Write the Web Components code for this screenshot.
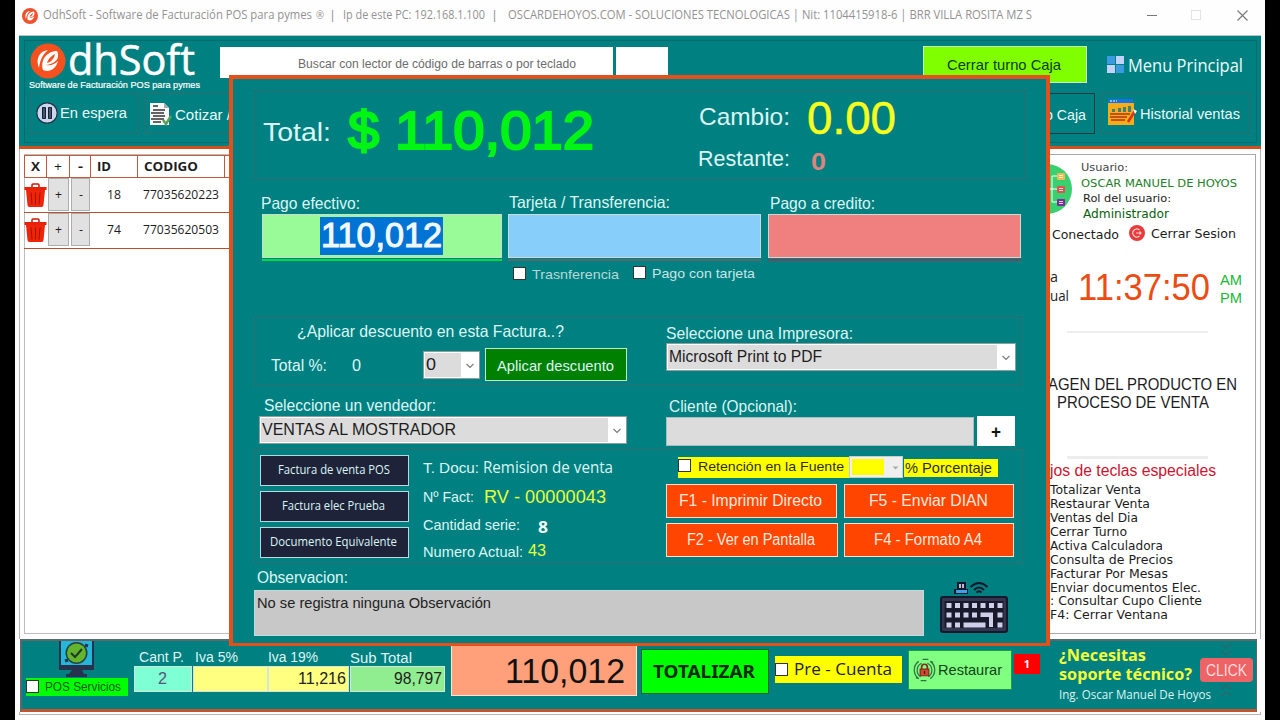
<!DOCTYPE html>
<html lang="es">
<head>
<meta charset="utf-8">
<title>OdhSoft</title>
<style>
  html, body { margin: 0; height: 100%; }
  body {
    background: #000;
    width: 1280px;
    height: 720px;
    overflow: hidden;
    font-family: "Liberation Sans", Arial, sans-serif;
  }
</style>
</head>
<body>
<pos-window></pos-window>

<script>
// Shared by every element: fills an open shadow root with styles and markup
class BaseElement extends HTMLElement {
  constructor() {
    super();
    this.attachShadow({ mode: 'open' });
  }

  connectedCallback() {
    this.shadowRoot.innerHTML = `
      <style>
        :host { display: block; box-sizing: border-box; }
        * { box-sizing: border-box; }
        .row { display: flex; align-items: flex-start; }
        .col { display: flex; flex-direction: column; }
        svg { display: block; flex: none; }
        ${this.styles()}
      </style>
      ${this.markup()}`;
    this.ready();
  }

  styles() { return ''; }
  markup() { return '<slot></slot>'; }
  ready() {}
}

const FONTS = {
  sans: { family: '"Liberation Sans", Arial, sans-serif', rise: 0.8465 },
  segoe: { family: '"Open Sans", "Noto Sans", sans-serif', rise: 0.888 },
  noto: { family: '"Noto Sans", sans-serif', rise: 0.888 },
  verdana: { family: '"DejaVu Sans", sans-serif', rise: 0.846 }
};

// <ui-text size w drop gap font weight thick color>
// w: width of the line, drop: baseline below the row's top, gap: space at the left
class UiText extends BaseElement {
  styles() {
    const size = Number(this.getAttribute('size') || 16);
    const font = FONTS[this.getAttribute('font') || 'sans'];
    const drop = this.getAttribute('drop');
    const top = drop === null ? 0 : Number(drop) - size * font.rise;
    return `
      :host {
        display: flex;
        flex: none;
        height: ${size}px;
        font: ${this.getAttribute('weight') || 400} ${size}px/${size}px ${font.family};
        margin-left: ${this.getAttribute('gap') || 0}px;
        padding-top: ${Math.max(top, 0)}px;
        margin-top: ${Math.min(top, 0)}px;
        box-sizing: content-box;
        color: ${this.getAttribute('color') || 'inherit'};
        -webkit-text-stroke: ${this.getAttribute('thick') || 0}px currentColor;
      }
      span { flex: none; white-space: pre; transform-origin: 0 50%; }`;
  }
  markup() { return '<span><slot></slot></span>'; }
  ready() {
    const w = Number(this.getAttribute('w'));
    if (!w) return;
    const span = this.shadowRoot.querySelector('span');
    const natural = span.getBoundingClientRect().width;
    this.style.width = w + 'px';
    if (natural) span.style.transform = `scaleX(${w / natural})`;
  }
}

// Box with a fixed size: <ui-box w h gap drop bg line>
class UiBox extends BaseElement {
  styles() {
    const a = (name, other) => this.getAttribute(name) || other;
    return `
      :host {
        display: flex;
        align-items: flex-start;
        flex: none;
        width: ${a('w', 10)}px;
        height: ${a('h', 10)}px;
        margin-left: ${a('gap', 0)}px;
        margin-top: ${a('drop', 0)}px;
        background: ${a('bg', 'transparent')};
        border: ${a('line', '0')};
      }
      :host([center]) { justify-content: center; }`;
  }
}

class UiCheck extends BaseElement {
  styles() {
    return `
      :host {
        flex: none;
        width: 13px;
        height: 13px;
        background: #fff;
        border: 1px solid #333;
        margin-left: ${this.getAttribute('gap') || 0}px;
        margin-top: ${this.getAttribute('drop') || 0}px;
      }`;
  }
  markup() { return ''; }
}

// Flat drop-down list
class UiCombo extends BaseElement {
  styles() {
    return `
      :host {
        flex: none;
        display: flex;
        align-items: stretch;
        width: ${this.getAttribute('w')}px;
        height: ${this.getAttribute('h')}px;
        margin-left: ${this.getAttribute('gap') || 0}px;
        margin-top: ${this.getAttribute('drop') || 0}px;
        background: #fff;
        border: 1px solid #8d9c9c;
      }
      .value { flex: 1; background: #dcdcdc; margin: 1px 0 1px 1px; color: #1c1c1c; }
      .arrow { width: 18px; display: flex; align-items: center; justify-content: center; }`;
  }
  markup() {
    return `
      <div class="value"><slot></slot></div>
      <div class="arrow">
        <svg width="10" height="7" viewBox="0 0 10 7"><path d="M1.5 2 5 5.5 8.5 2" fill="none" stroke="#777" stroke-width="1.1"/></svg>
      </div>`;
  }
}

class PosTitlebar extends BaseElement {
  styles() {
    return `
      :host { height: 35px; background: #fffefe; color: #929292; }
      .row { height: 35px; }
      .logo { margin: 8px 0 0 7px; }
      .ctl { margin-top: 8px; }`;
  }
  markup() {
    return `
      <div class="row">
        <svg class="logo" width="16" height="16" viewBox="0 0 36 36">
          <circle cx="18" cy="18" r="18" fill="#f0512d"/>
          <path d="M9 25C5 15 10 8 18 7c-6 5-8 11-9 18z" fill="#fff"/>
          <path d="M13 27C10 17 17 8 27 8c4 8-3 13-11 14 5 1 9-1 12-4-2 8-9 12-15 9z" fill="#fff"/>
          <path d="M17 20c1-4 4-7 8-9-1 5-4 8-8 9z" fill="#f0512d"/>
        </svg>
        <ui-text font="segoe" size="12" w="269" drop="20" gap="5">OdhSoft - Software de Facturación POS para pymes</ui-text>
        <ui-text font="segoe" size="10" w="8" drop="19" gap="4">®</ui-text>
        <ui-text size="12" w="3" drop="19" gap="7">|</ui-text>
        <ui-text font="segoe" size="12" w="142" drop="20" gap="9">Ip de este PC: 192.168.1.100</ui-text>
        <ui-text size="12" w="3" drop="19" gap="8">|</ui-text>
        <ui-text font="segoe" size="12" w="524" drop="20" gap="12">OSCARDEHOYOS.COM - SOLUCIONES TECNOLOGICAS | Nit: 1104415918-6 | BRR VILLA ROSITA MZ S</ui-text>
        <svg class="ctl" style="margin-left:115px" width="104" height="14" viewBox="0 0 104 14" fill="none">
          <path d="M0 7.500h10" stroke="#777"/>
          <rect x="44.500" y="2.500" width="9" height="9" stroke="#e6e2e2"/>
          <path d="M90.500 2.500l10 10M100.500 2.500l-10 10" stroke="#777" stroke-width="1.100"/>
        </svg>
      </div>`;
  }
}

class PosHeader extends BaseElement {
  styles() {
    return `
      :host {
        height: 114px;
        margin: 0 4px;
        background: #008080;
        border-top: 1px solid #b9c4c4;
        border-bottom: 3px solid #d0501f;
        padding: 4px 4px 3px 5px;
        color: #e9fbfb;
      }
      .inner { border: 1px solid #086a6d; height: 103px; }
      .brand { width: 195px; }
      .brand svg { margin: 2px 0 0 5px; }
      .slot-box { border: 1px solid #2d6e6e; height: 41px; display: flex; }
      .tools { height: 41px; }`;
  }
  markup() {
    return `
      <div class="inner">
        <div class="row" style="height:52px">
          <div class="brand">
            <div class="row" style="height:37px">
              <svg width="36" height="36" viewBox="0 0 36 36">
                <circle cx="18" cy="18" r="17.500" fill="#f4511e"/>
                <path d="M9 25C5 15 10 8 18 7c-6 5-8 11-9 18z" fill="#fff"/>
                <path d="M13 27C10 17 17 8 27 8c4 8-3 13-11 14 5 1 9-1 12-4-2 8-9 12-15 9z" fill="#fff"/>
                <path d="M17 20c1-4 4-7 8-9-1 5-4 8-8 9z" fill="#f4511e"/>
              </svg>
              <ui-text font="segoe" size="42.500" w="127" drop="35" gap="2" thick="0.6" color="#fff">dhSoft</ui-text>
            </div>
            <ui-text size="9.500" w="171" drop="10" gap="4" thick="0.2" color="#fff">Software de Facturación POS para pymes</ui-text>
          </div>
          <ui-box w="393" h="31" drop="6" bg="#fff"><ui-text size="12" w="278" drop="21" gap="78" color="#6c6c6c">Buscar con lector de código de barras o por teclado</ui-text></ui-box>
          <ui-box w="52" h="31" drop="6" gap="3" bg="#fff"></ui-box>
          <ui-box w="164" h="37" drop="5" gap="255" bg="#7fff00" line="1px solid #c9f7c0" center><ui-text size="15" w="114" drop="23" gap="-2" color="#123a12">Cerrar turno Caja</ui-text></ui-box>
          <svg style="margin:15px 0 0 20px" width="17" height="17" viewBox="0 0 17 17">
            <path fill="#3b9be0" d="M0 0h8v8H0zM9 9h8v8H9z"/><path fill="#c3d3f7" d="M9 0h8v8H9zM0 9h8v8H0z"/>
          </svg>
          <ui-text font="segoe" size="18" w="115" drop="31" gap="4">Menu Principal</ui-text>
        </div>
        <div class="row tools">
          <div class="slot-box" style="width:109px;margin-left:5px">
            <svg style="margin:8px 0 0 5px" width="22" height="22" viewBox="0 0 22 22">
              <circle cx="11" cy="11" r="10.200" fill="#c9d6ee" stroke="#26344a" stroke-width="1.200"/>
              <path fill="#44546f" stroke="#17202e" d="M6.500 5.500h3v11h-3zM12.500 5.500h3v11h-3z"/>
            </svg>
            <ui-text size="15.500" w="67" drop="24" gap="2">En espera</ui-text>
          </div>
          <div class="slot-box" style="width:110px;margin-left:6px">
            <svg style="margin:8px 0 0 3px" width="23" height="24" viewBox="0 0 23 24">
              <path d="M1 1h14l5 5v17H1z" fill="#f8f8f8"/><path d="M15 1v5h5z" fill="#aaa"/>
              <path d="M4 4h5M4 8h12M2 11h13M4 14h12M2 17h13M4 20h8" stroke="#333" stroke-width="1.300"/>
              <path d="M14 18l3 4 5-8" fill="none" stroke="#5b9d59" stroke-width="2.500"/>
            </svg>
            <ui-text size="15" w="56" drop="26" gap="3">Cotizar /</ui-text>
          </div>
          <div class="slot-box" style="width:48px;margin-left:792px;border-color:#123c3f">
            <ui-text size="15" w="41" drop="26" gap="-3">o Caja</ui-text>
          </div>
          <div class="slot-box" style="width:149px;margin-left:6px">
            <svg style="margin:4px 0 0 5px" width="30" height="28" viewBox="0 0 30 28">
              <path d="M1 1h25v4H1z" fill="#1473e6"/><path d="M3 3h7" stroke="#fff" stroke-dasharray="2 1"/>
              <path d="M1 5h26v22H1z" fill="#f9ac15"/>
              <path d="M5 14v-3h3v3zM11 14v-4h3v4zM16 14V9h3v5zM21 14V8h3v6z" fill="#3f8174"/>
              <path d="M3 16h20M3 19h17M4 22h14" stroke="#b5331a" stroke-width="1.500"/>
              <path d="M28 13l-7 11" stroke="#d33523" stroke-width="2.600"/><path d="M26 11l4 2-2 3" fill="#fff"/>
            </svg>
            <ui-text size="15" w="100" drop="25" gap="3">Historial ventas</ui-text>
          </div>
        </div>
      </div>`;
  }
}

class PosItems extends BaseElement {
  styles() {
    return `
      :host { width: 210px; height: 480px; border: 1px solid #bdbdbd; border-right: 0; background: #fff; color: #1d1d1d; }
      .head, .item { display: flex; }
      .head { height: 23px; border: 1px solid #c05a3a; border-right: 0; margin-left: -1px; }
      .head > div { display: flex; justify-content: center; border-right: 1px solid #c05a3a; }
      .item { height: 36px; border-bottom: 1px solid #b8502e; margin-left: -1px; }
      .item:nth-of-type(2) { height: 35px; }
      .item svg { margin-top: 5px; }
      .btn { width: 21px; height: 33px; margin-left: 2px; background: #e1e1e1; border: 1px solid #adadad; display: flex; justify-content: center; }`;
  }
  item(id, code) {
    return `
      <div class="item">
        <svg width="23" height="25" viewBox="0 0 23 25">
          <path d="M8 4V2q0-1 1-1h5q1 0 1 1v2" fill="none" stroke="#c71a06" stroke-width="1.500"/>
          <path d="M0.500 4h22v3h-22z" fill="#e8220a"/><path d="M2 7h19l-1.500 15q0 2-2 2h-12q-2 0-2-2z" fill="#f02408"/>
          <path d="M7 9.500l1 12M11.500 9.500v12M16 9.500l-1 12" stroke="#a31404"/>
        </svg>
        <div class="btn" style="margin-left:1px"><ui-text font="segoe" size="12" w="7" drop="21">+</ui-text></div>
        <div class="btn" style="width:19px"><ui-text font="segoe" size="12" w="4" drop="21">-</ui-text></div>
        <ui-text font="segoe" size="12.500" w="14" drop="22" gap="17">${id}</ui-text>
        <ui-text font="segoe" size="12.500" w="76" drop="22" gap="22">${code}</ui-text>
      </div>`;
  }
  markup() {
    return `
      <div class="head">
        <div style="width:22px"><ui-text font="segoe" weight="700" size="13" w="9" drop="16">X</ui-text></div>
        <div style="width:23px"><ui-text font="segoe" size="13" w="8" drop="16">+</ui-text></div>
        <div style="width:21px"><ui-text font="segoe" weight="700" size="13" w="5" drop="16">-</ui-text></div>
        <div style="width:47px;justify-content:flex-start"><ui-text font="segoe" weight="700" size="13" w="14" drop="16" gap="6">ID</ui-text></div>
        <div style="width:87px;justify-content:flex-start"><ui-text font="segoe" weight="700" size="13" w="54" drop="16" gap="6">CODIGO</ui-text></div>
      </div>
      ${this.item('18', '77035620223')}
      ${this.item('74', '77035620503')}`;
  }
}

class PosSide extends BaseElement {
  styles() {
    return `
      :host { width: 210px; height: 480px; border: 1px solid #a9a9a9; border-left: 0; background: #fff; overflow: hidden; color: #1c1c1c; padding-left: 4px; }
      .sep { height: 2px; width: 141px; background: #ededed; margin-left: 17px; }
      .keys { height: 13.9px; }`;
  }
  markup() {
    const keys = [
      ['Totalizar Venta', 91], ['Restaurar Venta', 100], ['Ventas del Dia', 88], ['Cerrar Turno', 77],
      ['Activa Calculadora', 113], ['Consulta de Precios', 123], ['Facturar Por Mesas', 118],
      ['Enviar documentos Elec.', 151], [': Consultar Cupo Cliente', 152], ['F4: Cerrar Ventana', 118]
    ];
    return `
      <div class="row" style="height:67px">
        <svg width="23" height="62" viewBox="0 0 23 62" style="margin-left:0">
          <circle cx="-3" cy="34" r="25" fill="#39d06f"/>
          <path d="M2 21h6M-4 34H10M2 21v26h8" stroke="#fff" fill="none"/>
          <rect x="7" y="18" width="8" height="7" rx="1" fill="#f5b955"/><rect x="7" y="31" width="8" height="7" rx="1" fill="#e3524f"/><rect x="7" y="44" width="8" height="7" rx="1" fill="#7c2c9b"/>
          <path d="M9 20.500h4M9 22.500h4M9 33.500h4M9 35.500h4M9 46.500h4M9 48.500h4" stroke="#fff" stroke-width=".8"/>
        </svg>
        <div class="col" style="margin-left:8px">
          <div style="height:16px"><ui-text font="verdana" size="11" w="47" drop="16" color="#444">Usuario:</ui-text></div>
          <div style="height:16px"><ui-text font="verdana" size="11" w="156" drop="16" color="#26802a">OSCAR MANUEL DE HOYOS</ui-text></div>
          <div style="height:16px"><ui-text font="verdana" size="11" w="88" drop="15" gap="2">Rol del usuario:</ui-text></div>
          <div style="height:16px"><ui-text font="verdana" size="11.500" w="86" drop="16" gap="2" color="#08600c">Administrador</ui-text></div>
        </div>
      </div>
      <div class="row" style="height:40px">
        <ui-text font="verdana" size="12" w="67" drop="17" gap="2">Conectado</ui-text>
        <svg style="margin:3px 0 0 10px" width="16" height="16" viewBox="0 0 16 16">
          <circle cx="8" cy="8" r="8" fill="#e53b3b"/>
          <path d="M10.500 5A4 4 0 1 0 10.500 11M7 8h5M10.500 6.500 12 8l-1.500 1.500" fill="none" stroke="#ffc7c7" stroke-width="1.200"/>
        </svg>
        <ui-text font="verdana" size="12" w="85" drop="16" gap="6">Cerrar Sesion</ui-text>
      </div>
      <div class="row" style="height:69px">
        <div class="col" style="width:27px">
          <div style="height:20px"><ui-text font="segoe" size="15" w="8" drop="20">a</ui-text></div>
          <div style="height:20px"><ui-text font="segoe" size="15" w="19" drop="19.500">ual</ui-text></div>
        </div>
        <ui-text size="36" w="132" drop="38" gap="1" color="#ec4c12">11:37:50</ui-text>
        <div class="col" style="margin-left:10px;color:#20b836">
          <div style="height:18px"><ui-text size="15.500" w="22" drop="23.500">AM</ui-text></div>
          <div style="height:18px"><ui-text size="15.500" w="22" drop="23.500">PM</ui-text></div>
        </div>
      </div>
      <div class="sep"></div>
      <div style="height:42px"></div>
      <div style="height:18px"><ui-text size="16" w="189" drop="16" gap="-2">AGEN DEL PRODUCTO EN</ui-text></div>
      <div style="height:63px"><ui-text size="16" w="152" drop="16" gap="7">PROCESO DE VENTA</ui-text></div>
      <div class="sep" style="height:3px"></div>
      <div style="height:20px"><ui-text size="16" w="166" drop="18" gap="0" color="#cc1430">jos de teclas especiales</ui-text></div>
      <div style="height:3px"></div>
      ${keys.map(([t, w]) => `<div class="keys"><ui-text font="verdana" size="11.500" w="${w}" drop="13">${t}</ui-text></div>`).join('')}`;
  }
}

class PosFooter extends BaseElement {
  styles() {
    return `
      :host {
        height: 73px;
        margin: 0 8px 0 5px;
        background: #008080;
        border: 2px solid #5a6a6c;
        border-width: 2px 1px 0 2px;
        border-bottom: 3px solid #c2552f;
        color: #dff5f5;
      }
      .service { width: 106px; height: 68px; padding-left: 4px; }
      .service svg { margin: 0 0 0 32px; }
      .amount { display: flex; flex-direction: column; }
      .amount > div { height: 25px; }`;
  }
  amount(label, lw, lgap, ldrop, gap, box) {
    return `<div class="amount" style="margin-left:${gap}px"><div><ui-text size="14" w="${lw}" drop="${ldrop}" gap="${lgap}">${label}</ui-text></div>${box}</div>`;
  }
  markup() {
    const line = '1px solid #d4e6dc';
    return `
      <div class="row">
        <div class="service">
          <svg width="37" height="37" viewBox="0 0 37 37">
            <path d="M1 0h35v29H1z" fill="#26324e"/><path d="M3 0h31v24H3z" fill="#25b7d9"/>
            <path d="M14 29h10l2 4H11z" fill="#26324e"/><path d="M8 33h21v3H8z" fill="#26324e"/>
            <circle cx="18.500" cy="12" r="11" fill="#263f44"/><circle cx="18.500" cy="12" r="9.500" fill="#62b52c"/>
            <path d="M13 12l4 4 7-8" fill="none" stroke="#203a26" stroke-width="2"/>
            <path d="M10 19l-3 1M27 4l3 1" stroke="#26324e" stroke-width="3"/>
          </svg>
          <ui-box w="102" h="18" bg="#00ff00"><ui-check drop="2"></ui-check><ui-text size="12" w="76" drop="13" gap="6" color="#0b5a14">POS Servicios</ui-text></ui-box>
        </div>
        ${this.amount('Cant P.', 45, 5, 21, 6, `<ui-box w="58" h="26" bg="#7fffd4" line="${line}"><ui-text size="17" w="9" drop="17.500" gap="23" color="#557">2</ui-text></ui-box>`)}
        ${this.amount('Iva 5%', 43, 2, 20.5, 1, `<ui-box w="75" h="26" bg="#ffff80" line="${line}"></ui-box>`)}
        ${this.amount('Iva 19%', 50, 0, 20.5, 0, `<ui-box w="81" h="26" bg="#ffff80" line="${line}"><ui-text size="17" w="48" drop="17.500" gap="29" color="#222">11,216</ui-text></ui-box>`)}
        ${this.amount('Sub Total', 62, 0, 22, 1, `<ui-box w="95" h="26" bg="#90ee90" line="${line}"><ui-text size="17" w="48" drop="17.500" gap="43" color="#222">98,797</ui-text></ui-box>`)}
        <ui-box w="186" h="51" gap="6" drop="4" bg="#ffa07a" line="1px solid #fbe3d8"><ui-text size="35" w="120" drop="36.500" gap="53" color="#111">110,012</ui-text></ui-box>
        <ui-box w="128" h="45" gap="4" drop="8" bg="#00ff00" line="1px solid #19632a" center><ui-text font="noto" weight="700" size="17" w="102" drop="28.500" gap="-2" color="#062a06">TOTALIZAR</ui-text></ui-box>
        <ui-box w="127" h="27" gap="6" drop="15" bg="#ffff00"><ui-check drop="7"></ui-check><ui-text font="segoe" size="17" w="98" drop="19.500" gap="6" color="#222">Pre - Cuenta</ui-text></ui-box>
        <ui-box w="104" h="40" gap="6" drop="9" bg="#80ff80" line="1px solid #209a45">
          <svg style="margin:7px 0 0 4px" width="23" height="24" viewBox="0 0 24 24" fill="none" stroke="#2d7343" stroke-width="1.300">
            <path d="M6 3A11 11 0 0 0 6 21M9 5A8 8 0 0 0 8 19M6 21l-3-1M18 3A11 11 0 0 1 18 21M15 5A8 8 0 0 1 16 19M18 3l3 1M10 1h6M8 23h6"/>
            <path d="M9 11V9a3 3 0 0 1 6 0v2" stroke="#842b1f" stroke-width="1.800"/><path d="M7.500 11h9v7h-9z" fill="#d7442f" stroke="#842b1f"/>
            <path d="M12 13v3" stroke="#222"/>
          </svg>
          <ui-text size="15" w="64" drop="23.500" gap="2" color="#123f19">Restaurar</ui-text>
        </ui-box>
        <ui-box w="26" h="20" gap="2" drop="13" bg="#ff0000" center><ui-text font="segoe" weight="700" size="11" drop="14" color="#fff">1</ui-text></ui-box>
        <div class="col" style="margin-left:19px;width:141px;color:#f4ff3a">
          <div style="height:19px"><ui-text font="noto" weight="700" size="16" w="87" drop="20.500">¿Necesitas</ui-text></div>
          <div style="height:20px"><ui-text font="noto" weight="700" size="16" w="133" drop="20">soporte técnico?</ui-text></div>
          <div style="height:20px"><ui-text font="segoe" size="12" w="152" drop="20" color="#dff5f5">Ing. Oscar Manuel De Hoyos</ui-text></div>
        </div>
        <div class="col">
          <svg style="margin-left:19px" width="14" height="17" viewBox="0 0 14 17" fill="none" stroke="#2a6870" stroke-width="1.500"><path d="M2 3l5 4 5-4M2 10l5 4 5-4"/></svg>
          <ui-box w="53" h="24" bg="#ee6366" style="border-radius:4px" center><ui-text size="17" w="41" drop="18.500" color="#ffdede">CLICK</ui-text></ui-box>
          <svg style="margin-left:19px" width="14" height="17" viewBox="0 0 14 17" fill="none" stroke="#2a6870" stroke-width="1.500"><path d="M2 7l5-4 5 4M2 14l5-4 5 4"/></svg>
        </div>
      </div>`;
  }
}

// Payment dialog, floats over the sales screen
class PayDialog extends BaseElement {
  styles() {
    return `
      :host {
        position: absolute;
        left: 229px;
        top: 75px;
        width: 821px;
        height: 571px;
        background: #008080;
        border: 4px solid #e5501a;
        border-bottom-width: 3px;
        padding: 11px 0 0 21px;
        color: #dcf6f6;
      }
      .group { border: 1px solid #2c6f70; }
      .totals { width: 772px; height: 90px; }
      .under { height: 2px; margin-top: 1px; }
      .docs { width: 150px; gap: 5px; margin: 6px 0 0 4px; }
      .info { width: 245px; margin-left: 13px; }
      .info > .row { height: 28px; }`;
  }
  field(label, lw, lgap, ldrop, w, bg, under, gap, inner = '') {
    return `
      <div class="col" style="margin-left:${gap}px;width:${w}px">
        <div style="height:24px"><ui-text size="16.500" w="${lw}" gap="${lgap}" drop="${ldrop}">${label}</ui-text></div>
        <ui-box w="${w}" h="44" bg="${bg}" line="1px solid #c8dcd8">${inner}</ui-box>
        <div class="under" style="background:${under}"></div>
      </div>`;
  }
  doc(label, w) {
    return `<ui-box w="149" h="31" bg="#1e2339" line="1px solid #b8d8e0" center><ui-text font="segoe" size="12" w="${w}" gap="-2" drop="18.500">${label}</ui-text></ui-box>`;
  }
  action(label, w, bw, gap = 0) {
    return `<ui-box w="${bw}" h="34" gap="${gap}" bg="#ff4500" line="1px solid #ffe0d0" center><ui-text size="16" w="${w}" gap="-2" drop="21.500" color="#ffe9df">${label}</ui-text></ui-box>`;
  }
  markup() {
    return `
      <div class="group totals row">
        <ui-text size="26" w="68" drop="50" gap="8">Total:</ui-text>
        <ui-text size="53" thick="2.2" w="246" drop="57.500" gap="17" color="#00f514">$ 110,012</ui-text>
        <div class="col" style="margin-left:104px">
          <div class="row" style="height:45px">
            <ui-text size="24" w="91" drop="34" gap="1">Cambio:</ui-text>
            <ui-text size="46" thick="0.5" w="89" drop="43" gap="17" color="#f6ff1e">0.00</ui-text>
          </div>
          <div class="row">
            <ui-text size="22" w="92" drop="31">Restante:</ui-text>
            <ui-text size="23" weight="700" w="15" drop="34.500" gap="21" color="#db8580">0</ui-text>
          </div>
        </div>
      </div>
      <div class="row" style="height:82px;padding:10px 0 0 8px">
        ${this.field('Pago efectivo:', 99, -1, 19, 240, '#98fb98', '#00dc3c', 0, `
          <ui-box w="123" h="38" gap="57" drop="2" bg="#0073d5" center><ui-text size="35" thick="1.1" w="121" drop="30" color="#f2f8ff">110,012</ui-text></ui-box>`)}
        ${this.field('Tarjeta / Transferencia:', 161, 1, 18, 253, '#87cefa', '#59686a', 6)}
        ${this.field('Pago a credito:', 105, 2, 19, 253, '#f08080', '#75465c', 7)}
      </div>
      <div class="row" style="height:54px">
        <ui-check gap="259" drop="5"></ui-check>
        <ui-text size="13.500" w="87" drop="17" gap="6" color="#b5d9da">Trasnferencia</ui-text>
        <ui-check gap="14" drop="4"></ui-check>
        <ui-text size="13.500" w="103" drop="16" gap="6" color="#c8e6e7">Pago con tarjeta</ui-text>
      </div>
      <div class="group row" style="width:766px;height:70px;margin-left:1px">
        <div class="col" style="width:410px">
          <div style="height:31px"><ui-text size="16.500" w="267" drop="20" gap="41">¿Aplicar descuento en esta Factura..?</ui-text></div>
          <div class="row">
            <ui-text size="16" w="56" drop="23.500" gap="15">Total %:</ui-text>
            <ui-text size="16" w="9" drop="23.500" gap="25">0</ui-text>
            <ui-combo w="57" h="28" gap="62" drop="3"><ui-text size="16.500" w="10" drop="17" gap="1">0</ui-text></ui-combo>
            <ui-box w="142" h="33" gap="5" bg="#008000" line="1px solid #bfe8c6" center><ui-text size="15" w="117" gap="-2" drop="21.500">Aplicar descuento</ui-text></ui-box>
          </div>
        </div>
        <div class="col">
          <div style="height:26px"><ui-text size="16.500" w="187" drop="22">Seleccione una Impresora:</ui-text></div>
          <ui-combo w="350" h="28"><ui-text size="16.500" w="153" drop="16.500" gap="1">Microsoft Print to PDF</ui-text></ui-combo>
        </div>
      </div>
      <div class="row" style="height:62px;padding-left:5px">
        <div class="col" style="width:407px">
          <div style="height:30px"><ui-text size="16.500" w="172" drop="25" gap="5">Seleccione un vendedor:</ui-text></div>
          <ui-combo w="368" h="28"><ui-text size="16.500" w="194" drop="17" gap="1">VENTAS AL MOSTRADOR</ui-text></ui-combo>
        </div>
        <div class="col">
          <div style="height:31px"><ui-text size="16.500" w="128" drop="26" gap="2.5">Cliente (Opcional):</ui-text></div>
          <div class="row">
            <ui-box w="308" h="29" bg="#dcdcdc" line="1px solid #a8bcbc"></ui-box>
            <ui-box w="38" h="30" gap="3" drop="-1" bg="#fff" center><ui-text size="18" weight="700" w="10" drop="22.500" color="#111">+</ui-text></ui-box>
          </div>
        </div>
      </div>
      <div class="group row" style="width:768px;height:116px;margin-left:1px">
        <div class="col docs">
          ${this.doc('Factura de venta POS', 112)}
          ${this.doc('Factura elec Prueba', 103)}
          ${this.doc('Documento Equivalente', 127)}
        </div>
        <div class="col info">
          <div class="row"><ui-text size="15.500" w="56" drop="24.500">T. Docu:</ui-text><ui-text font="segoe" size="16" w="130" drop="24.500" gap="4">Remision de venta</ui-text></div>
          <div class="row"><ui-text size="14.500" w="51" drop="25">Nº Fact:</ui-text><ui-text size="18.500" w="122" drop="26.500" gap="10" color="#e4ff3c">RV - 00000043</ui-text></div>
          <div class="row"><ui-text size="14.500" w="97" drop="25">Cantidad serie:</ui-text><ui-text font="segoe" weight="700" size="16" w="10" drop="28" gap="18" color="#f4ffff">8</ui-text></div>
          <div class="row"><ui-text size="14.500" w="100" drop="24">Numero Actual:</ui-text><ui-text size="16" w="18" drop="24" gap="5" color="#e4ff3c">43</ui-text></div>
        </div>
        <div class="col" style="padding-top:7px;margin-left:-2px">
          <div class="row" style="height:28px;padding-left:12px;color:#30300a">
            <ui-box w="171" h="21" drop="1" bg="#ffff00"><ui-check drop="2"></ui-check><ui-text size="13.500" w="146" drop="14.500" gap="7">Retención en la Fuente</ui-text></ui-box>
            <ui-box w="54" h="22" bg="#efefef" line="1px solid #c4cfc8">
              <ui-box w="32" h="16" gap="2" drop="2" bg="#ffff00"></ui-box>
              <svg style="margin:9px 0 0 8px" width="7" height="5" viewBox="0 0 7 5"><path d="M0.500 0.500h6l-3 3z" fill="#aaa"/></svg>
            </ui-box>
            <ui-box w="94" h="18" gap="1" drop="3" bg="#ffff00"><ui-text size="14.500" w="87" drop="14" gap="1">% Porcentaje</ui-text></ui-box>
          </div>
          <div class="row" style="height:39px">${this.action('F1 - Imprimir Directo', 143, 171)}${this.action('F5 - Enviar DIAN', 119, 170, 7)}</div>
          <div class="row">${this.action('F2 - Ver en Pantalla', 128, 172)}${this.action('F4 - Formato A4', 108, 170, 6)}</div>
        </div>
      </div>
      <div style="height:26px"><ui-text size="16" w="91" drop="20" gap="3">Observacion:</ui-text></div>
      <div class="row">
        <ui-box w="670" h="46" bg="#c8c8c8" line="1px solid #c4dada"><ui-text size="15" w="234" drop="17" gap="2" color="#222">No se registra ninguna Observación</ui-text></ui-box>
        <svg style="margin:-9px 0 0 16px" width="68" height="53" viewBox="0 0 68 53">
          <path d="M17 1h9v7h2v5H14V8h3z" fill="#15172a"/><path d="M19 3h5v4h-5z" fill="#b9bbd8"/><path d="M21.500 3v4" stroke="#15172a"/><path d="M16 9h11v3H16z" fill="#3fa0ea"/>
          <path d="M30.500 6q8.500-8 17 0M34 9q5-5 10 0M36.500 11.500q2.500-2.500 5 0" fill="none" stroke="#15172a" stroke-width="2"/>
          <rect x="1" y="16" width="66" height="35" rx="2" fill="#333650" stroke="#15172a" stroke-width="2"/>
          <path d="M4.500 20h59v27h-59z" fill="#181a2c"/>
          <path d="M6.500 22h5v5h-5zM15 22h5v5h-5zM23.500 22h5v5h-5zM32 22h5v5h-5zM40.500 22h5v5h-5zM49 22h5v5h-5zM57.500 22h5v5h-5zM6.500 31.500h5v5h-5zM15 31.500h5v5h-5zM23.500 31.500h5v5h-5zM32 31.500h5v5h-5zM40.500 31.500H53V46h-4V36h-8.500zM57.500 31.500h5v5h-5zM6.500 41.500h5v5h-5zM15 41.500h5v5h-5zM23.500 41.500h22v5h-22zM57.500 41.500h5v5h-5z" fill="#cfcfea"/>
        </svg>
      </div>`;
  }
}

class PosWindow extends BaseElement {
  styles() {
    return `
      :host { width: 1250px; height: 720px; margin: 0 15px; background: #fdfdfd; overflow: hidden; }
      .main { display: flex; justify-content: space-between; height: 490px; margin: 0 4px; padding: 5px 4px 0; border: solid #b6b6b6; border-width: 0 1px; }
      .base { height: 3px; margin: 0 4px; border: solid #b6b6b6; border-width: 0 1px 1px; }`;
  }
  markup() {
    return `
      <pos-titlebar></pos-titlebar>
      <pos-header></pos-header>
      <div class="main"><pos-items></pos-items><pos-side></pos-side></div>
      <pos-footer></pos-footer>
      <div class="base"></div>
      <pay-dialog></pay-dialog>`;
  }
}

customElements.define('ui-text', UiText);
customElements.define('ui-box', UiBox);
customElements.define('ui-check', UiCheck);
customElements.define('ui-combo', UiCombo);
customElements.define('pos-titlebar', PosTitlebar);
customElements.define('pos-header', PosHeader);
customElements.define('pos-items', PosItems);
customElements.define('pos-side', PosSide);
customElements.define('pos-footer', PosFooter);
customElements.define('pay-dialog', PayDialog);
customElements.define('pos-window', PosWindow);
</script>
</body>
</html>
